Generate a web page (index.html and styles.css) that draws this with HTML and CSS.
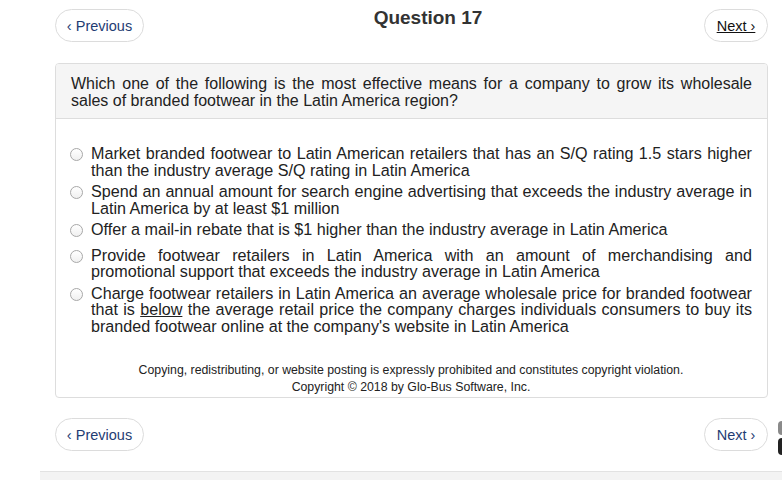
FILE: index.html
```html
<!DOCTYPE html>
<html lang="en">
<head>
<meta charset="utf-8">
<title>Question 17</title>
<link rel="stylesheet" href="styles.css">
</head>
<body>
<div class="page">
  <div class="nav nav-top">
    <a class="btn">&lsaquo; Previous</a>
    <h1 class="title">Question 17</h1>
    <a class="btn btn-active">Next &rsaquo;</a>
  </div>

  <div class="panel">
    <div class="panel-head">
      Which one of the following is the most effective means for a company to grow its wholesale sales of branded footwear in the Latin America region?
    </div>
    <div class="panel-body">
      <ul class="options">
        <li class="option"><span class="radio"></span><span class="opt-text">Market branded footwear to Latin American retailers that has an S/Q rating 1.5 stars higher than the industry average S/Q rating in Latin America</span></li>
        <li class="option"><span class="radio"></span><span class="opt-text">Spend an annual amount for search engine advertising that exceeds the industry average in Latin America by at least $1 million</span></li>
        <li class="option option-gap"><span class="radio"></span><span class="opt-text">Offer a mail-in rebate that is $1 higher than the industry average in Latin America</span></li>
        <li class="option"><span class="radio"></span><span class="opt-text">Provide footwear retailers in Latin America with an amount of merchandising and promotional support that exceeds the industry average in Latin America</span></li>
        <li class="option"><span class="radio"></span><span class="opt-text">Charge footwear retailers in Latin America an average wholesale price for branded footwear that is <u class="em">below</u> the average retail price the company charges individuals consumers to buy its branded footwear online at the company's website in Latin America</span></li>
      </ul>
      <p class="copy">Copying, redistributing, or website posting is expressly prohibited and constitutes copyright violation.<br>Copyright &copy; 2018 by Glo-Bus Software, Inc.</p>
    </div>
  </div>

  <div class="nav nav-bottom">
    <a class="btn">&lsaquo; Previous</a>
    <a class="btn">Next &rsaquo;</a>
  </div>
  <div class="edge">
    <span class="edge-a"></span>
    <span class="edge-b"></span>
  </div>
</div>
<div class="band"></div>
</body>
</html>
```

FILE: styles.css
```css
html, body {
  margin: 0;
  padding: 0;
  background: #ffffff;
  font-family: "Liberation Sans", Arial, Helvetica, sans-serif;
  color: #222;
  overflow: hidden;
}

.page {
  position: relative;
  width: 713px;
  margin-left: 55px;
}

.nav {
  display: flex;
  justify-content: space-between;
  align-items: flex-start;
}

.nav-top {
  padding-top: 9px;
}

.nav-bottom {
  padding-top: 20px;
  padding-bottom: 20px;
}

.title {
  margin: -1px 0 0 8px;
  font-size: 19px;
  line-height: 20px;
  font-weight: bold;
  color: #333;
}

.btn {
  display: inline-flex;
  align-items: center;
  justify-content: center;
  box-sizing: border-box;
  height: 33px;
  padding: 0;
  border: 1px solid #dcdcdc;
  border-radius: 17px;
  background: #fff;
  font-size: 14.5px;
  color: #1f3d73;
  text-decoration: none;
  white-space: nowrap;
}

.nav .btn:first-child {
  width: 89px;
}

.nav .btn:last-child {
  width: 64px;
}

.btn-active {
  color: #111;
  text-decoration: underline;
}

.panel {
  margin-top: 21px;
  border: 1px solid #dddddd;
  border-radius: 4px;
  overflow: hidden;
}

.panel-head {
  background: #f5f5f5;
  border-bottom: 1px solid #dddddd;
  padding: 11px 15px 9px 15px;
  font-size: 16px;
  line-height: 17px;
  text-align: justify;
  color: #222;
}

.panel-body {
  padding: 26px 15px 2px 14px;
}

.options {
  list-style: none;
  margin: 0;
  padding: 0;
}

.option {
  display: flex;
  align-items: flex-start;
  margin-bottom: 5px;
  font-size: 16.15px;
  line-height: 16.5px;
}

.option-gap {
  margin-bottom: 9px;
}

.radio {
  flex: none;
  box-sizing: border-box;
  width: 13px;
  height: 13px;
  margin-top: 3px;
  margin-right: 8px;
  border: 1px solid #a8a8a8;
  border-radius: 50%;
  background: linear-gradient(#ffffff, #f0f0f0);
}

.opt-text {
  flex: 1;
  text-align: justify;
}

.em {
  display: inline-block;
  line-height: 16.5px;
}

.copy {
  margin: 28px 0 0 0;
  text-align: center;
  font-size: 12.3px;
  line-height: 16.5px;
  color: #222;
}

.edge {
  position: absolute;
  left: 723px;
  top: 421px;
  display: flex;
  flex-direction: column;
  gap: 3px;
}

.edge-a, .edge-b {
  display: block;
  width: 8px;
  height: 14px;
  border-radius: 5px;
}

.edge-a {
  background: #8a8a8a;
}

.edge-b {
  height: 17px;
  background: #222;
}

.band {
  margin-left: 40px;
  height: 20px;
  border-top: 1px solid #e2e2e2;
  background: #f3f3f3;
}
```
